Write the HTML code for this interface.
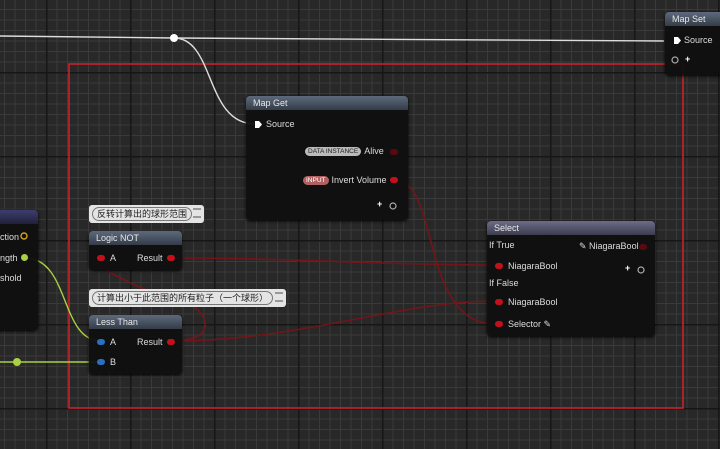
<!DOCTYPE html>
<html><head><meta charset="utf-8"><style>
*{margin:0;padding:0;box-sizing:border-box}
body{width:720px;height:449px;overflow:hidden;background:#282828;font-family:"Liberation Sans","Noto Sans CJK SC",sans-serif;color:#ddd;font-size:9px;position:relative}
.grid{position:absolute;left:0;top:0;width:720px;height:449px;
background-image:linear-gradient(#161616 1.5px,transparent 1.5px),linear-gradient(90deg,#161616 1.5px,transparent 1.5px),linear-gradient(#3a3a3a 1px,transparent 1px),linear-gradient(90deg,#3a3a3a 1px,transparent 1px);
background-size:84px 84px,84px 84px,10.5px 10.5px,10.5px 10.5px;background-position:46px 72px,46px 72px,4px 9px,4px 9px}
.node{position:absolute;background:rgba(16,16,16,.96);border-radius:4px;box-shadow:0 1px 3px #000}
.hd{height:14px;border-radius:4px 4px 0 0;background:linear-gradient(#5d6a7c,#343c48);color:#e8e8e8;font-size:9px;padding:2px 7px;line-height:11px}
.t{position:absolute;white-space:nowrap;color:#ddd}
.pin{position:absolute;width:8px;height:6px;border-radius:3px;background:#c4101a}
.bpin{position:absolute;width:8px;height:6px;border-radius:3px;background:#2a6fc4}
.cm{position:absolute;background:#e4e4e4;border-radius:3px;color:#222;font-size:9px;padding:2px 3px;height:18px;white-space:nowrap}
.cm span{display:inline-block;border:1px solid #777;border-radius:7px;padding:0 4px;line-height:12px;white-space:nowrap}
.cm i{position:absolute;right:3px;top:3px;width:8px;height:10px;border-top:2px solid #999;border-bottom:2px solid #999}
.tag{display:inline-block;border-radius:5px;font-size:6.5px;padding:0 3px;line-height:9px;margin-right:3px;vertical-align:1px}
</style></head><body>
<div class="grid"></div>
<svg width="720" height="449" style="position:absolute;left:0;top:0">
<rect x="69" y="64" width="614" height="344" fill="none" stroke="#c8222a" stroke-width="1.6"/>
<path d="M0 36 L174 38 L664 41" stroke="#ddd" stroke-width="1.4" fill="none"/>
<path d="M174 38 C215 38 205 124 255 124" stroke="#ddd" stroke-width="1.4" fill="none"/>
<circle cx="174" cy="38" r="4" fill="#fff"/>
<path d="M25 258 C70 258 60 341 101 341" stroke="#a8d040" stroke-width="1.4" fill="none"/>
<path d="M0 362 L101 362" stroke="#a8d040" stroke-width="1.4"/>
<circle cx="17" cy="362" r="4" fill="#a8d040"/>
<g stroke="#7a1419" stroke-width="1.6" fill="none" opacity=".9">
<path d="M172 258 C300 258 380 265 495 265"/>
<path d="M395 180 C440 180 420 324 495 324"/>
<path d="M172 341 C300 341 400 301 495 301"/>
<path d="M172 341 C220 341 210 310 180 300 C130 290 70 250 101 258"/>
</g>
</svg>
<div class="node" style="left:-20px;top:210px;width:58px;height:120px">
<div class="hd" style="background:linear-gradient(#3d3d6e,#20203a)"></div>
<div class="t" style="left:20px;top:22px">ction</div>
<svg style="position:absolute;left:40px;top:22px" width="10" height="8"><circle cx="4" cy="4" r="3" fill="none" stroke="#d4a020" stroke-width="1.4"/></svg>
<div class="t" style="left:20px;top:43px">ngth</div>
<div style="position:absolute;left:41px;top:44px;width:7px;height:7px;border-radius:50%;background:#a8d040"></div>
<div class="t" style="left:20px;top:63px">shold</div>
</div>
<div class="cm" style="left:89px;top:205px;width:115px"><span>反转计算出的球形范围</span><i></i></div>
<div class="node" style="left:89px;top:231px;width:93px;height:39px">
<div class="hd">Logic NOT</div>
<div class="pin" style="left:8px;top:24px"></div><div class="t" style="left:21px;top:22px">A</div>
<div class="t" style="left:48px;top:22px">Result</div><div class="pin" style="left:78px;top:24px"></div>
</div>
<div class="cm" style="left:89px;top:289px;width:197px"><span>计算出小于此范围的所有粒子（一个球形）</span><i></i></div>
<div class="node" style="left:89px;top:315px;width:93px;height:59px">
<div class="hd">Less Than</div>
<div class="bpin" style="left:8px;top:24px"></div><div class="t" style="left:21px;top:22px">A</div>
<div class="t" style="left:48px;top:22px">Result</div><div class="pin" style="left:78px;top:24px"></div>
<div class="bpin" style="left:8px;top:44px"></div><div class="t" style="left:21px;top:42px">B</div>
</div>
<div class="node" style="left:246px;top:96px;width:162px;height:124px">
<div class="hd">Map Get</div>
<svg style="position:absolute;left:8px;top:24px" width="9" height="9"><path d="M1 1h4l3 3.5-3 3.5h-4z" fill="#fff"/></svg>
<div class="t" style="left:20px;top:23px">Source</div>
<div class="t" style="left:59px;top:50px"><span class="tag" style="background:#bbb;color:#222">DATA INSTANCE</span>Alive</div>
<div class="pin" style="left:144px;top:53px;background:#5a0a0e"></div>
<div class="t" style="left:57px;top:79px"><span class="tag" style="background:#b06060;color:#fff">INPUT</span>Invert Volume</div>
<div class="pin" style="left:144px;top:81px"></div>
<div class="t" style="left:131px;top:103px;color:#fff;font-weight:bold">+</div>
<svg style="position:absolute;left:143px;top:106px" width="10" height="8"><circle cx="4" cy="4" r="3" fill="none" stroke="#aaa" stroke-width="1.2"/></svg>
</div>
<div class="node" style="left:487px;top:221px;width:168px;height:115px">
<div class="hd" style="background:linear-gradient(#6c6c88,#3c3c4e)">Select</div>
<div class="t" style="left:2px;top:19px">If True</div>
<div class="t" style="left:92px;top:20px">✎ NiagaraBool</div><div class="pin" style="left:152px;top:23px;background:#5a0a0e"></div>
<div class="pin" style="left:8px;top:42px"></div><div class="t" style="left:21px;top:40px">NiagaraBool</div>
<div class="t" style="left:138px;top:42px;color:#fff;font-weight:bold">+</div>
<svg style="position:absolute;left:150px;top:45px" width="10" height="8"><circle cx="4" cy="4" r="3" fill="none" stroke="#aaa" stroke-width="1.2"/></svg>
<div class="t" style="left:2px;top:57px">If False</div>
<div class="pin" style="left:8px;top:78px"></div><div class="t" style="left:21px;top:76px">NiagaraBool</div>
<div class="pin" style="left:8px;top:100px"></div><div class="t" style="left:21px;top:98px">Selector ✎</div>
</div>
<div class="node" style="left:665px;top:12px;width:60px;height:63px">
<div class="hd">Map Set</div>
<svg style="position:absolute;left:8px;top:24px" width="9" height="9"><path d="M1 1h4l3 3.5-3 3.5h-4z" fill="#fff"/></svg>
<div class="t" style="left:19px;top:23px">Source</div>
<svg style="position:absolute;left:6px;top:44px" width="10" height="8"><circle cx="4" cy="4" r="3" fill="none" stroke="#aaa" stroke-width="1.2"/></svg>
<div class="t" style="left:20px;top:42px;color:#fff;font-weight:bold">+</div>
</div>
</body></html>
